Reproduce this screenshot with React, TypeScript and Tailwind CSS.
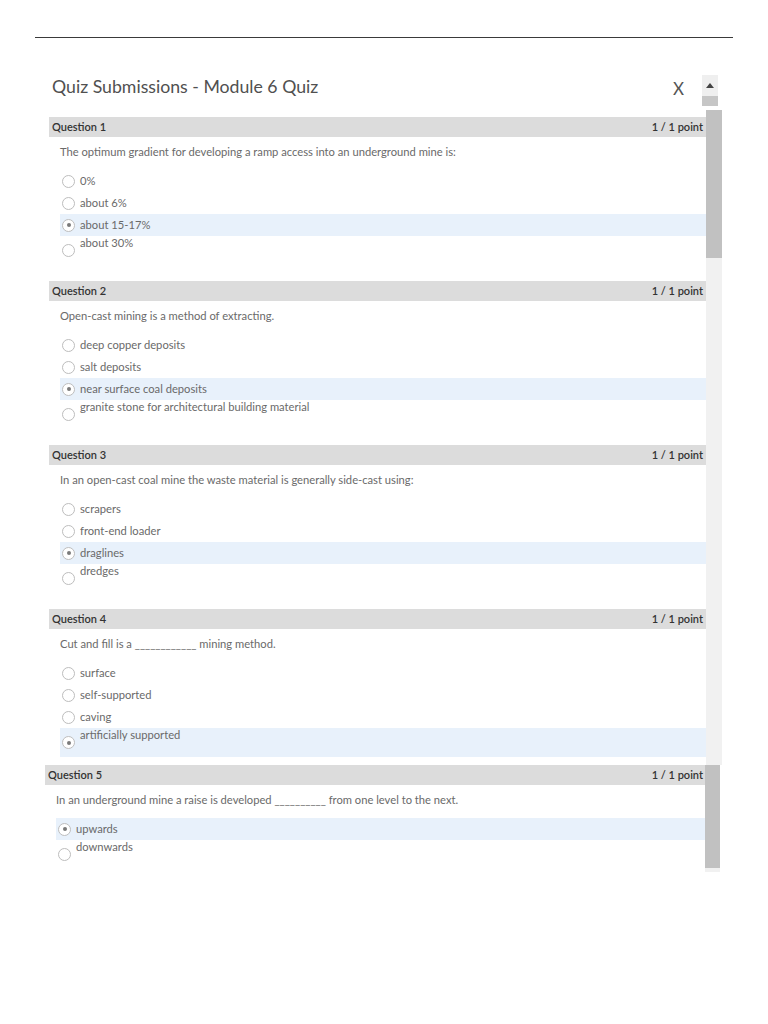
import React from "react";

type Question = {
  title: string;
  text: string;
  options: string[];
  selected: number;
  height: string;
  shift?: string;
};

const questions: Question[] = [
  {
    title: "Question 1",
    text: "The optimum gradient for developing a ramp access into an underground mine is:",
    options: ["0%", "about 6%", "about 15-17%", "about 30%"],
    selected: 2,
    height: "h-[164px]",
  },
  {
    title: "Question 2",
    text: "Open-cast mining is a method of extracting.",
    options: [
      "deep copper deposits",
      "salt deposits",
      "near surface coal deposits",
      "granite stone for architectural building material",
    ],
    selected: 2,
    height: "h-[164px]",
  },
  {
    title: "Question 3",
    text: "In an open-cast coal mine the waste material is generally side-cast using:",
    options: ["scrapers", "front-end loader", "draglines", "dredges"],
    selected: 2,
    height: "h-[164px]",
  },
  {
    title: "Question 4",
    text: "Cut and fill is a ____________ mining method.",
    options: ["surface", "self-supported", "caving", "artificially supported"],
    selected: 3,
    height: "h-[156px]",
  },
  {
    title: "Question 5",
    text: "In an underground mine a raise is developed __________ from one level to the next.",
    options: ["upwards", "downwards"],
    selected: 0,
    height: "h-[110px]",
    shift: "-ml-[4px]",
  },
];

function Radio({ checked, className = "" }: { checked: boolean; className?: string }) {
  return (
    <span
      className={`flex items-center justify-center w-[13px] h-[13px] shrink-0 rounded-full border border-[#bdbdbd] bg-white ${className}`}
    >
      {checked && <span className="w-[4px] h-[4px] rounded-full bg-[#7a7a7a]" />}
    </span>
  );
}

function QuestionBlock({ q }: { q: Question }) {
  const last = q.options.length - 1;
  return (
    <div className={`${q.height} ${q.shift ?? ""}`}>
      {/* header bar */}
      <div className="flex items-center justify-between h-[20px] bg-[#dcdcdc] pl-[3px] pr-[3px] text-[11px] font-semibold text-[#333]">
        <span>{q.title}</span>
        <span>1 / 1 point</span>
      </div>

      <div className="pl-[11px]">
        <p className="mt-[8px] text-[11.2px] leading-[14px] text-[#6a6a6a]">{q.text}</p>

        <div className="mt-[11px]">
          {q.options.map((opt, i) => {
            const active = i === q.selected;
            if (i === last) {
              return (
                <div
                  key={opt}
                  className={`flex items-start gap-[5px] pl-[2px] ${active ? "bg-[#e8f1fb] h-[29px]" : "h-[26px]"}`}
                >
                  <Radio checked={active} className="mt-[8px]" />
                  <span className="text-[11.2px] leading-[14px] text-[#6a6a6a]">{opt}</span>
                </div>
              );
            }
            return (
              <div
                key={opt}
                className={`flex items-center gap-[5px] h-[22px] pl-[2px] ${active ? "bg-[#e8f1fb]" : ""}`}
              >
                <Radio checked={active} />
                <span className="text-[11.2px] leading-[14px] text-[#6a6a6a]">{opt}</span>
              </div>
            );
          })}
        </div>
      </div>
    </div>
  );
}

export default function App() {
  return (
    <div className="w-[768px] h-[1024px] bg-white font-['Lato','Open_Sans',sans-serif]">
      {/* top rule */}
      <div className="pt-[37px] px-[35px]">
        <div className="h-px bg-[#3a3a3a]" />
      </div>

      <div className="mt-[37px] pl-[49px] flex">
        {/* main dialog column */}
        <div className="w-[657px]">
          <div className="flex items-start justify-between h-[42px]">
            <h1 className="ml-[3px] text-[17.7px] leading-[24px] text-[#505050]">
              Quiz Submissions - Module 6 Quiz
            </h1>
            <span className="mr-[22px] mt-[3px] text-[17px] leading-[22px] text-[#555]">X</span>
          </div>

          {questions.map((q) => (
            <QuestionBlock key={q.title} q={q} />
          ))}
        </div>

        {/* scrollbar */}
        <div className="w-[16px] flex flex-col">
          <div className="-ml-[4px] w-[16px] h-[21px] bg-[#efefef] flex items-center justify-center">
            <svg width="8" height="5" viewBox="0 0 8 5">
              <path d="M0 5 L4 0 L8 5 Z" fill="#444" />
            </svg>
          </div>
          <div className="-ml-[4px] w-[16px] h-[10px] bg-[#c6c6c6]" />
          <div className="h-[4px]" />
          <div className="h-[148px] bg-[#c1c1c1]" />
          <div className="h-[507px] bg-[#f1f1f1]" />
          <div className="-ml-[1px] w-[15px] h-[103px] bg-[#c1c1c1]" />
          <div className="-ml-[1px] w-[15px] h-[4px] bg-[#f1f1f1]" />
        </div>
      </div>
    </div>
  );
}
